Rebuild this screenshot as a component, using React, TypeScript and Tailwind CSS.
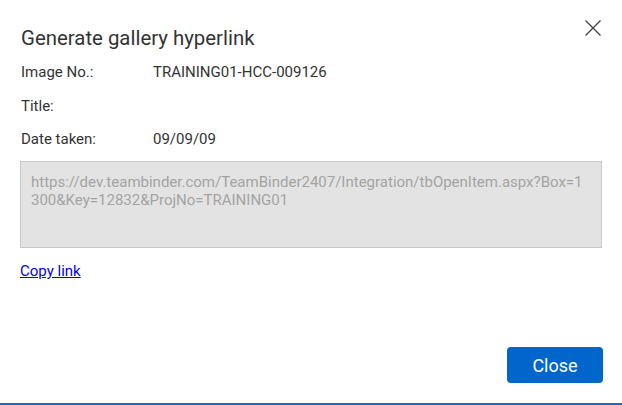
import React from 'react';

const url =
  'https://dev.teambinder.com/TeamBinder2407/Integration/tbOpenItem.aspx?Box=1300&Key=12832&ProjNo=TRAINING01';

const rows: { label: string; value: string }[] = [
  { label: 'Image No.:', value: 'TRAINING01-HCC-009126' },
  { label: 'Title:', value: '' },
  { label: 'Date taken:', value: '09/09/09' },
];

const CloseIcon = () => (
  <svg width="16" height="16" viewBox="0 0 16 16" fill="none" stroke="#404040" strokeWidth="1.3">
    <path d="M0.5 0.5 L15.5 15.5 M15.5 0.5 L0.5 15.5" />
  </svg>
);

const App: React.FC = () => {
  return (
    <div className="w-[622px] h-[405px] bg-white flex flex-col border-b-2 border-[#0a6fd0] font-['Roboto',sans-serif] text-[#333333]">
      <div className="flex justify-between items-start pl-[21px] pr-[21px]">
        <h1 className="mt-[24px] text-[20.4px] leading-[28px] font-normal">Generate gallery hyperlink</h1>
        <button className="mt-[20px]" title="Close">
          <CloseIcon />
        </button>
      </div>

      <div className="mt-[10px] pl-[21px] flex flex-col gap-[13.5px]">
        {rows.map((r) => (
          <div key={r.label} className="flex text-[15px] leading-[20px] h-[20px]">
            <span className="w-[132px]">{r.label}</span>
            <span>{r.value}</span>
          </div>
        ))}
      </div>

      <div className="mx-[20px] mt-[12px] h-[87px] bg-[#e3e3e3] border border-[#c9c9c9] pt-[11px] pl-[10px] pr-[11px] text-[15px] leading-[18px] text-[#a3a3a3] break-all">
        {url}
      </div>

      <div className="mt-[13px] pl-[20px] text-[15px] leading-[20px]">
        <a href="#" className="text-[#0000ee] underline">Copy link</a>
      </div>

      <div className="flex-1" />

      <div className="flex justify-end pr-[19px] mb-[20px]">
        <button className="w-[96px] h-[36px] rounded-[4px] bg-[#0066cc] text-white text-[18px]">Close</button>
      </div>
    </div>
  );
};

export default App;
